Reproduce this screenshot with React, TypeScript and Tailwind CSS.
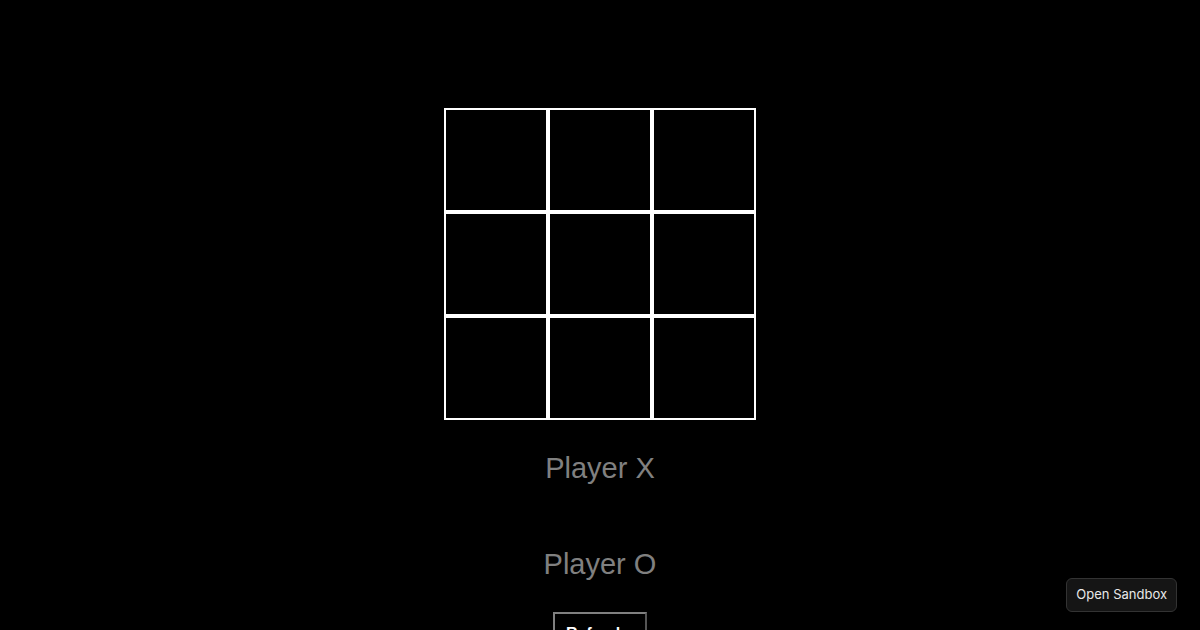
const cells = Array.from({ length: 9 }, (_, i) => i);

const Board = () => {
  return (
    <div className="grid grid-cols-[repeat(3,104px)] grid-rows-[repeat(3,104px)]">
      {cells.map((c) => (
        <button key={c} className="border-2 border-white bg-black" />
      ))}
    </div>
  );
};

export default function App() {
  return (
    <div className="relative h-[630px] w-full overflow-hidden bg-black font-['Liberation_Sans',Arial,sans-serif]">
      <div className="flex flex-col items-center pt-[108px]">
        <Board />
        <h2 className="mt-[32px] text-[29px] leading-[33px] text-[#808080]">Player X</h2>
        <h2 className="mt-[63px] text-[29px] leading-[33px] text-[#808080]">Player O</h2>
        <button className="mt-[31px] w-[94px] border-2 border-[#808080] border-r-[#555] border-b-[#555] bg-black py-[8px] pl-[11px] text-left text-[16px] font-bold text-white">
          Refresh
        </button>
      </div>
      <button className="absolute right-[23px] bottom-[18px] h-[34px] rounded-md border border-[#333] bg-[#151515] px-[9px] text-[13px] text-[#e8e8e8] font-['Inter',sans-serif]">
        Open Sandbox
      </button>
    </div>
  );
}
